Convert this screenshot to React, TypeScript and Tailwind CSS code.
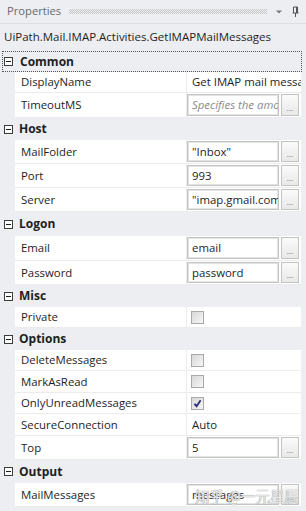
import React from "react";

type Row =
  | { kind: "header"; label: string; h: string }
  | { kind: "text"; label: string; value: string; h: string; italic?: boolean }
  | { kind: "plain"; label: string; value: string; h: string }
  | { kind: "check"; label: string; checked: boolean; h: string };

const rows: Row[] = [
  { kind: "header", label: "Common", h: "h-[21px]" },
  { kind: "plain", label: "DisplayName", value: "Get IMAP mail messages", h: "h-[21px]" },
  { kind: "text", label: "TimeoutMS", value: "Specifies the amount of time", h: "h-[25px]", italic: true },
  { kind: "header", label: "Host", h: "h-[22px]" },
  { kind: "text", label: "MailFolder", value: "\"Inbox\"", h: "h-[24px]" },
  { kind: "text", label: "Port", value: "993", h: "h-[24px]" },
  { kind: "text", label: "Server", value: "\"imap.gmail.com\"", h: "h-[24px]" },
  { kind: "header", label: "Logon", h: "h-[24px]" },
  { kind: "text", label: "Email", value: "email", h: "h-[25px]" },
  { kind: "text", label: "Password", value: "password", h: "h-[24px]" },
  { kind: "header", label: "Misc", h: "h-[22px]" },
  { kind: "check", label: "Private", checked: false, h: "h-[21px]" },
  { kind: "header", label: "Options", h: "h-[22px]" },
  { kind: "check", label: "DeleteMessages", checked: false, h: "h-[21px]" },
  { kind: "check", label: "MarkAsRead", checked: false, h: "h-[22px]" },
  { kind: "check", label: "OnlyUnreadMessages", checked: true, h: "h-[21px]" },
  { kind: "plain", label: "SecureConnection", value: "Auto", h: "h-[22px]" },
  { kind: "text", label: "Top", value: "5", h: "h-[24px]" },
  { kind: "header", label: "Output", h: "h-[23px]" },
  { kind: "text", label: "MailMessages", value: "messages", h: "h-[24px]" },
];

function MinusBox() {
  return (
    <div className="w-[9px] h-[9px] border border-[#3c3c3c] bg-white flex items-center justify-center">
      <div className="w-[5px] h-[1px] bg-[#202020]" />
    </div>
  );
}

function CheckBox({ checked }: { checked: boolean }) {
  return (
    <div className="w-[13px] h-[13px] border border-[#a9a9a9] bg-[linear-gradient(135deg,#d8d8d8,#f6f6f6)] flex items-center justify-center">
      {checked && (
        <svg width="9" height="9" viewBox="0 0 9 9">
          <path d="M1.5 4.8 L3.6 7.2 L7.6 1.2" stroke="#2b2d78" strokeWidth="1.8" fill="none" />
        </svg>
      )}
    </div>
  );
}

export default function App() {
  return (
    <div
      className="relative w-[306px] h-[511px] overflow-hidden bg-[#eceef1] text-[11.4px] text-[#1e1e1e]"
      style={{ fontFamily: '"Segoe UI", "Open Sans", "Noto Sans", sans-serif' }}
    >
      {/* Title bar */}
      <div className="h-[24px] flex items-center pl-[7px] pr-[6px] border-b border-[#dcdee2]">
        <span className="text-[#6a6a6a] text-[11.2px]">Properties</span>
        <div className="flex-1 mx-[8px] h-[5px] bg-[repeating-conic-gradient(#c6c6c6_0_25%,transparent_0_50%)] bg-[length:2px_2px]" />
        <svg width="8" height="6" viewBox="0 0 8 6" className="mr-[8px]">
          <path d="M1 1.5 H7 L4 4.5 Z" fill="#777" />
        </svg>
        <svg width="9" height="12" viewBox="0 0 9 12">
          <path d="M2.5 1 V7 M6.5 1 V7 M1.5 7 H7.5 M4.5 7 V11 M2.5 1 H6.5" stroke="#555" strokeWidth="1" fill="none" />
          <rect x="5" y="1" width="1.5" height="6" fill="#555" />
        </svg>
      </div>

      {/* Type name */}
      <div className="h-[26px] flex items-center pl-[4px] text-[11.5px]">
        UiPath.Mail.IMAP.Activities.GetIMAPMailMessages
      </div>

      {/* Grid */}
      <div className="w-[301px] pt-[1px]">
        {rows.map((r, i) => {
          if (r.kind === "header") {
            return (
              <div
                key={i}
                className={`${r.h} flex items-center ${
                  i === 0 ? "border border-dotted border-[#555] ml-[2px] w-[300px]" : ""
                }`}
              >
                <div className={`${i === 0 ? "w-[13px] pl-[1px]" : "w-[15px] pl-[4px]"} flex items-center`}>
                  <MinusBox />
                </div>
                <span className="font-bold pl-[4px] text-[12px]">{r.label}</span>
              </div>
            );
          }
          return (
            <div key={i} className={`${r.h} flex`}>
              <div className="w-[15px]" />
              <div className="w-[171px] bg-white border-b border-[#ececec] flex items-center pl-[6px]">
                {r.label}
              </div>
              <div className="w-[1px] bg-[#ececec]" />
              <div className="flex-1 bg-white border-b border-[#ececec] flex items-center min-w-0">
                {r.kind === "plain" && (
                  <span className="pl-[5px] whitespace-nowrap overflow-hidden">{r.value}</span>
                )}
                {r.kind === "check" && (
                  <div className="pl-[4px]">
                    <CheckBox checked={r.checked} />
                  </div>
                )}
                {r.kind === "text" && (
                  <div className="flex items-center h-full py-[1px] gap-[2px]">
                    <div className="w-[92px] h-full border border-[#c4c4c4] shadow-[inset_0_0_0_1px_#e4e4e4] bg-white flex items-center pl-[4px] overflow-hidden whitespace-nowrap">
                      <span className={r.italic ? "italic text-[#8a8a8a]" : ""}>{r.value}</span>
                    </div>
                    <div className="w-[18px] h-full border border-[#c3c3c3] bg-[linear-gradient(#fafafa,#e9e9e9)] flex items-end justify-center pb-[3px]">
                      <span className="text-[8px] leading-none text-[#666]">...</span>
                    </div>
                  </div>
                )}
              </div>
            </div>
          );
        })}
      </div>

      {/* Watermark */}
      <div
        className="absolute left-[195px] top-[485px] text-[14.5px] text-white/75 whitespace-nowrap"
        style={{ fontFamily: '"Noto Sans CJK SC", sans-serif', textShadow: "0 0 1px #999, 0 0 1px #999" }}
      >
        知乎 @一元星辰
      </div>
    </div>
  );
}
